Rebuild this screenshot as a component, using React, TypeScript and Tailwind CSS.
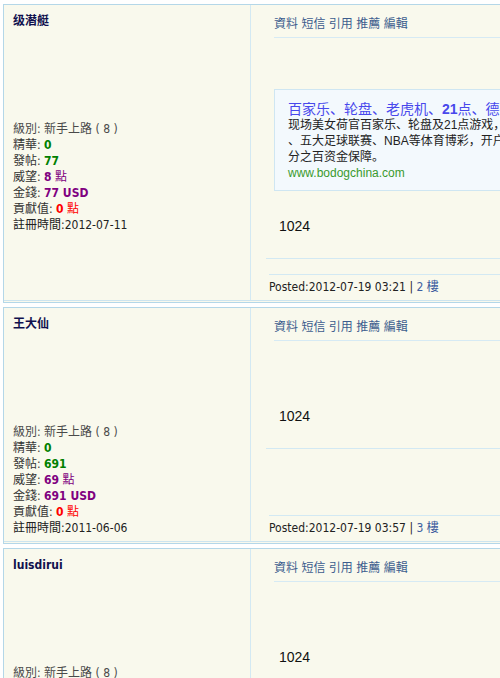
import React from "react";

type Post = {
    name: string;
    posts: string;
    prestige: string;
    money: string;
    contrib: string;
    regDate: string;
    postedAt: string;
    floor: number;
    ad?: boolean;
};

const posts: Post[] = [
    {
        name: "级潜艇",
        posts: "77",
        prestige: "8",
        money: "77",
        contrib: "0",
        regDate: "2012-07-11",
        postedAt: "2012-07-19 03:21",
        floor: 2,
        ad: true,
    },
    {
        name: "王大仙",
        posts: "691",
        prestige: "69",
        money: "691",
        contrib: "0",
        regDate: "2011-06-06",
        postedAt: "2012-07-19 03:57",
        floor: 3,
    },
    {
        name: "luisdirui",
        posts: "12",
        prestige: "1",
        money: "12",
        contrib: "0",
        regDate: "2012-05-02",
        postedAt: "2012-07-19 04:10",
        floor: 4,
    },
];

function AdBox() {
    return (
        <div className="mt-[51px] ml-[8px] w-[520px] border border-[#cfe6f2] bg-[#f3f9fd] pt-[11px] pb-[9px] pl-[13px] font-['Liberation_Sans','Noto_Sans_CJK_SC',sans-serif] whitespace-nowrap overflow-hidden">
            <div className="text-[14px] leading-4 text-[#4848ec]">
                百家乐、轮盘、老虎机、<span className="font-bold">21</span>点、德州扑克
            </div>
            <div className="text-[12px] leading-4 text-[#222]">
                现场美女荷官百家乐、轮盘及21点游戏，欧洲冠军杯
            </div>
            <div className="text-[12px] leading-4 text-[#222]">
                、五大足球联赛、NBA等体育博彩，开户即享百
            </div>
            <div className="text-[12px] leading-4 text-[#222]">
                分之百资金保障。
            </div>
            <div className="text-[12px] leading-4 text-[#3a9a2e]">
                www.bodogchina.com
            </div>
        </div>
    );
}

function PostRow({ post }: { post: Post }) {
    return (
        <div className="mb-[4px] w-[760px] border border-[#b4d7e8] bg-[#f9f9ed] pb-px">
            <div className="flex border-b border-[#cce4ef]">

                {/* user info */}
                <div className="w-[247px] shrink-0 border-r border-[#d3e9f3] pt-[8px] pb-[5px] pl-[9px] text-[12px] leading-4 text-[#333]">
                    <div className="font-bold text-[#10104e]">{post.name}</div>

                    <div className="mt-[92px] text-[#4a4a4a]">級別: 新手上路 ( 8 )</div>
                    <div>
                        精華: <span className="font-bold text-[#008000]">0</span>
                    </div>
                    <div>
                        發帖: <span className="font-bold text-[#008000]">{post.posts}</span>
                    </div>
                    <div>
                        威望: <span className="font-bold text-[#800080]">{post.prestige}</span>
                        <span className="text-[#800080]"> 點</span>
                    </div>
                    <div>
                        金錢: <span className="font-bold text-[#800080]">{post.money} USD</span>
                    </div>
                    <div>
                        貢獻值: <span className="font-bold text-[#ff0000]">{post.contrib}</span>
                        <span className="text-[#ff0000]"> 點</span>
                    </div>
                    <div className="text-[#222]">註冊時間:{post.regDate}</div>
                </div>

                {/* post body */}
                <div className="flex flex-1 flex-col">
                    <div className="ml-[23px] border-b border-[#d6eaf4] pt-[11px] pb-[5px] text-[12px] leading-4 text-[#3d5d8e]">
                        資料 短信 引用 推薦 編輯
                    </div>

                    <div className="ml-[15px] border-b border-[#d3e9f3] pb-[22px]">
                        {post.ad && <AdBox />}
                        <div
                            className={
                                post.ad
                                    ? "mt-[25px] ml-[13px] font-['Liberation_Sans',sans-serif] text-[14px] leading-5 text-[#111]"
                                    : "mt-[65px] ml-[13px] font-['Liberation_Sans',sans-serif] text-[14px] leading-5 text-[#111]"
                            }
                        >
                            1024
                        </div>
                    </div>

                    <div className="min-h-[15px] flex-1" />

                    <div className="ml-[18px] border-t border-[#d3e9f3] pt-[4px] pb-[5px] text-[12px] leading-4 text-[#222]">
                        Posted:{post.postedAt} | <span className="text-[#3d5d9e]">{post.floor} 樓</span>
                    </div>
                </div>
            </div>
        </div>
    );
}

export default function App() {
    return (
        <div className="h-[678px] w-[500px] overflow-hidden bg-white pt-[4px] pl-[3px] font-['DejaVu_Sans_Condensed','Liberation_Sans','Noto_Sans_CJK_TC',sans-serif]">
            {posts.map((post) => (
                <PostRow key={post.floor} post={post} />
            ))}
        </div>
    );
}
